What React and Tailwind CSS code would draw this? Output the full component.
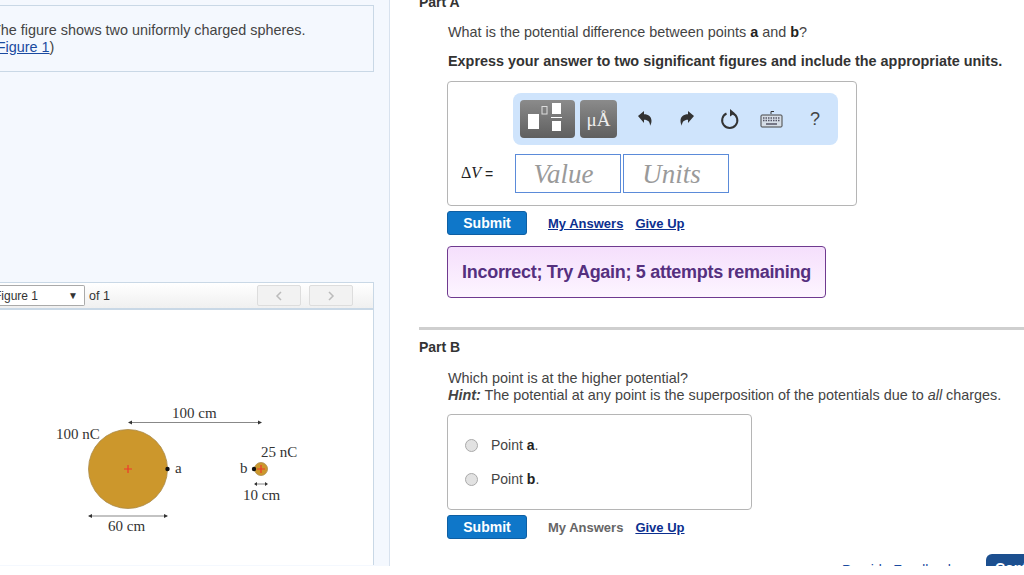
const font = { fontFamily: '"Liberation Sans", Arial, sans-serif' };
const serif = { fontFamily: '"Liberation Serif", serif' };

function Figure() {
  return (
    <svg width="373" height="256" viewBox="0 310 373 256" className="block">
      <path d="M129 422.500H261M89 516H167M255 484H267" fill="none" stroke="#555" strokeWidth="0.7" />
      <path d="M128 422.500l4-2v4zM262 422.500l-4-2v4zM88 516l4-2v4zM168 516l-4-2v4zM254 484l3-2v4zM268 484l-3-2v4z" fill="#333" />
      <circle cx="128" cy="469" r="39.500" fill="#cc972c" stroke="#a98a4a" strokeWidth="0.8" />
      <path d="M124 469h8M128 465v8" stroke="#ee3a2c" strokeWidth="1.200" />
      <circle cx="261" cy="469" r="6.500" fill="#cc972c" stroke="#a98a4a" strokeWidth="0.8" />
      <path d="M257 469h8M261 465v8" stroke="#ee3a2c" strokeWidth="1.200" />
      <circle cx="167.500" cy="469" r="2.200" fill="#111" />
      <circle cx="254" cy="469" r="2.200" fill="#111" />
      <g fontFamily='"Liberation Serif", serif' fontSize="15" fill="#333">
        <text x="172" y="418">100 cm</text>
        <text x="56" y="439">100 nC</text>
        <text x="175" y="473">a</text>
        <text x="240" y="473">b</text>
        <text x="261" y="457">25 nC</text>
        <text x="243" y="500">10 cm</text>
        <text x="108" y="531">60 cm</text>
      </g>
    </svg>
  );
}

function Toolbar() {
  return (
    <div className="ml-[65px] flex h-[52px] w-[325px] items-center rounded-lg bg-[#cfe4fc] pl-[7px]">
      <svg width="55" height="38" viewBox="0 0 55 38" className="rounded bg-gradient-to-b from-[#8b8b8b] to-[#5f5f5f]">
        <rect x="8" y="14" width="11" height="15" fill="#fff" />
        <rect x="22" y="6.500" width="5" height="7.500" fill="none" stroke="#ddd" />
        <rect x="32" y="3" width="9" height="11" fill="#fff" />
        <rect x="31" y="17" width="11" height="1" fill="#fff" />
        <rect x="32" y="21" width="9" height="10" fill="#fff" />
      </svg>
      <div
        className="ml-[5px] flex h-[38px] w-[37px] items-center justify-center rounded bg-gradient-to-b from-[#8b8b8b] to-[#5f5f5f] pt-[3px] text-[19px] text-[#eee]"
        style={serif}
      >
        μÅ
      </div>
      <svg width="16" height="18" viewBox="0 0 16 18" className="ml-[20px]">
        <path d="M1 6L7 1v3.200c4.500 0 7.500 2.500 7.500 6.600 0 2-.6 3.500-1.400 5-.1-3.700-2-6-6.100-6V13z" fill="#333" />
      </svg>
      <svg width="16" height="18" viewBox="0 0 16 18" className="ml-[26px]">
        <path d="M15 6L9 1v3.200c-4.500 0-7.500 2.500-7.500 6.600 0 2 .6 3.500 1.400 5 .1-3.700 2-6 6.100-6V13z" fill="#333" />
      </svg>
      <svg width="20" height="22" viewBox="0 0 20 22" className="ml-[25px]">
        <path d="M13 5.500A7.600 7.600 0 1 1 6.500 5.500" fill="none" stroke="#333" strokeWidth="2" />
        <path d="M10 1l5 4.300L10 8.500z" fill="#333" />
      </svg>
      <svg width="23" height="20" viewBox="0 0 23 20" className="ml-[20px]">
        <path d="M11 5V2.500h3" stroke="#333" strokeWidth="1" fill="none" />
        <rect x="1" y="6" width="21" height="12" rx="1" fill="#d5dde6" stroke="#444" />
        <path d="M3 9h17M3 11.500h17" stroke="#556" strokeWidth="1.300" strokeDasharray="1.500 1" />
        <path d="M6 15h11" stroke="#556" strokeWidth="1.500" />
      </svg>
      <span className="ml-[27px] text-[18px] leading-none text-[#444]">?</span>
    </div>
  );
}

function Links({ answersLink }) {
  return (
    <div className="flex h-[24px] items-center">
      <button className="h-[24px] w-[80px] rounded-[3px] border border-[#0e5fa3] bg-[#0f77c9] text-sm font-bold text-white">
        Submit
      </button>
      <a className={answersLink ? "ml-[21px] mt-[1px] text-[13px] font-bold text-[#0b2f8f] underline" : "ml-[21px] mt-[1px] text-[13px] font-bold text-[#666]"}>
        My Answers
      </a>
      <a className="ml-[12px] mt-[1px] text-[13px] font-bold text-[#0b2f8f] underline">Give Up</a>
    </div>
  );
}

function Radio({ letter }) {
  return (
    <div className="flex h-[34px] items-center pl-[17px] text-sm text-[#444]">
      <span className="h-[13px] w-[13px] rounded-full border border-[#aaa] bg-[#e2e2e2]" />
      <span className="ml-[13px]">
        Point <b className="text-[#222]">{letter}</b>.
      </span>
    </div>
  );
}

export default function App() {
  return (
    <div className="h-[575px] w-[1024px] overflow-hidden bg-white" style={font}>
      <div className="flex h-[566px] overflow-hidden">
        {/* Left pane */}
        <div className="h-full w-[390px] shrink-0 overflow-hidden border-r border-[#d8e2ee] bg-[#f4f8fe] pr-[15px]">
          <div className="mt-[5px] h-[67px] border border-l-0 border-[#c9d8e6] pt-[16px] text-[14.4px] leading-[17px] text-[#444]">
            <p className="-ml-[8px] whitespace-nowrap">The figure shows two uniformly charged spheres.</p>
            <p className="-ml-[8px] whitespace-nowrap">
              (<a className="text-[#1a4aa0] underline">Figure 1</a>)
            </p>
          </div>
          <div className="mt-[210px] flex h-[27px] items-center border border-l-0 border-[#c9d8e6] bg-gradient-to-b from-white to-[#f0f0f0] text-[12.5px] text-[#333]">
            <div className="flex h-[21px] w-[85px] items-center justify-between overflow-hidden rounded-r-[2px] border border-l-0 border-[#aaa] bg-white pr-[6px]">
              <span className="-ml-[6px] mt-[1px] whitespace-nowrap text-xs">Figure 1</span>
              <span className="text-[10px]">▼</span>
            </div>
            <span className="ml-[4px] mt-[1px]">of 1</span>
            <div className="ml-auto mr-[20px] flex gap-[8px]">
              <div className="flex h-[21px] w-[44px] items-center justify-center rounded-[2px] border border-[#ddd] bg-[#f2f2f2]">
                <svg width="8" height="10" viewBox="0 0 8 10"><path d="M6 1L2 5l4 4" fill="none" stroke="#bbb" strokeWidth="1.500" /></svg>
              </div>
              <div className="flex h-[21px] w-[44px] items-center justify-center rounded-[2px] border border-[#ddd] bg-[#f2f2f2]">
                <svg width="8" height="10" viewBox="0 0 8 10"><path d="M2 1l4 4-4 4" fill="none" stroke="#bbb" strokeWidth="1.500" /></svg>
              </div>
            </div>
          </div>
          <div className="h-[256px] border-r border-t border-[#c9d8e6] bg-white">
            <Figure />
          </div>
        </div>

        {/* Right pane */}
        <div className="min-w-0 flex-1 pl-[57px]">
          <h3 className="-mb-[24px] -ml-[28px] -mt-[8px] text-sm font-bold leading-[20px] text-[#333]">Part A</h3>
          <p className="ml-[1px] pt-[36px] text-[14.4px] leading-[16px] text-[#444]">
            What is the potential difference between points <b className="text-[#222]">a</b> and <b className="text-[#222]">b</b>?
          </p>
          <p className="ml-[1px] mt-[13px] whitespace-nowrap text-[14.4px] font-bold leading-[16px] text-[#333]">
            Express your answer to two significant figures and include the appropriate units.
          </p>
          <div className="mt-[12px] h-[125px] w-[410px] rounded border border-[#b5b5b5] pt-[11px]">
            <Toolbar />
            <div className="mt-[9px] flex items-center">
              <span className="ml-[13px] flex w-[54px] items-center text-sm text-[#222]">
                <span className="text-[16px]" style={serif}>Δ<i>V</i></span>
                <span className="ml-[4px]">=</span>
              </span>
              <div className="flex h-[39px] w-[106px] items-center justify-center border border-[#5b8bd9] pr-[9px] pt-[1px] text-[27px] italic text-[#9a9a9a]" style={serif}>
                Value
              </div>
              <div className="ml-[2px] flex h-[39px] w-[106px] items-center justify-center border border-[#5b8bd9] pr-[9px] pt-[1px] text-[27px] italic text-[#9a9a9a]" style={serif}>
                Units
              </div>
            </div>
          </div>
          <div className="mt-[5px]">
            <Links answersLink />
          </div>
          <div className="mt-[11px] flex h-[52px] w-[379px] items-center justify-center whitespace-nowrap rounded border border-[#6f3a8f] bg-gradient-to-b from-[#f5dffc] to-[#fdf5ff] text-[18px] font-bold tracking-[-0.3px] text-[#55307f]">
            Incorrect; Try Again; 5 attempts remaining
          </div>

          <div className="-ml-[28px] mt-[29px] h-[3px] bg-[#cfcfcf]" />
          <h3 className="-ml-[28px] mt-[7px] text-sm font-bold leading-[20px] text-[#333]">Part B</h3>
          <p className="ml-[1px] mt-[13px] text-[14.4px] leading-[16px] text-[#444]">Which point is at the higher potential?</p>
          <p className="ml-[1px] mt-[1px] whitespace-nowrap text-[14.4px] leading-[16px] text-[#444]">
            <b><i>Hint:</i></b> The potential at any point is the superposition of the potentials due to <i>all</i> charges.
          </p>
          <div className="mt-[11px] h-[96px] w-[305px] rounded border border-[#b5b5b5] pt-[13px]">
            <Radio letter="a" />
            <Radio letter="b" />
          </div>
          <div className="mt-[5px]">
            <Links />
          </div>
          <div className="mt-[15px] flex whitespace-nowrap">
            <a className="ml-[395px] mt-[6px] w-[110px] shrink-0 text-sm leading-[20px] text-[#1a4aa0]">Provide Feedback</a>
            <div className="ml-[34px] h-[30px] w-[60px] shrink-0 rounded-t-md bg-[#1c4f8f] pl-[9px] pt-[4px] text-sm font-bold text-white">
              Continue
            </div>
          </div>
        </div>
      </div>
    </div>
  );
}
